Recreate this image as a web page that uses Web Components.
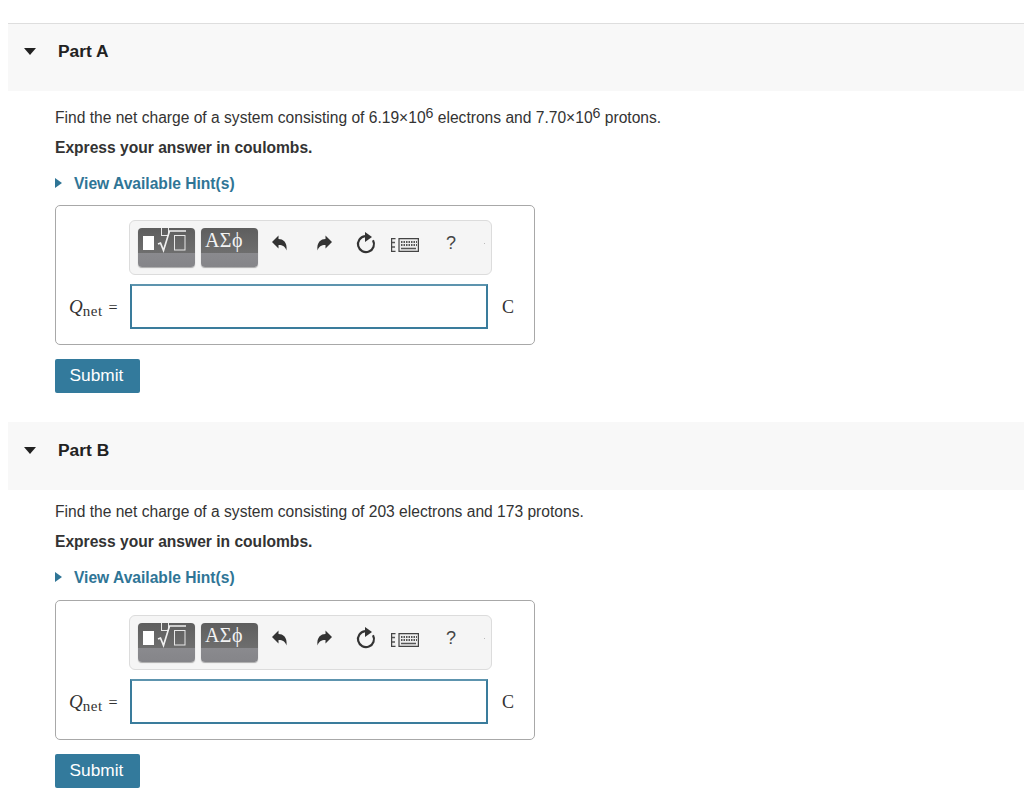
<!DOCTYPE html>
<html>
<head>
<meta charset="utf-8">
<title>Part A and Part B</title>
<style>
  html, body { margin: 0; padding: 0; background: #fff; }
  body { font-family: "Liberation Sans", Arial, sans-serif; color: #333; padding: 23px 0 0 8px; overflow: hidden; }
  sup { font-size: 14.200px; line-height: 0; vertical-align: 5px; }
</style>
</head>
<body>
<mp-part label="Part A" first>
  <span>Find the net charge of a system consisting of 6.19×10<sup>6</sup> electrons and 7.70×10<sup>6</sup> protons.</span>
</mp-part>
<mp-part label="Part B">
  <span>Find the net charge of a system consisting of 203 electrons and 173 protons.</span>
</mp-part>

<script>
class MpToolbar extends HTMLElement {
  constructor() {
    super();
    this.attachShadow({ mode: 'open' });
    this.shadowRoot.innerHTML = `
      <style>
        :host { display: flex; box-sizing: border-box; height: 55px; margin-left: 73px; width: 363px;
          padding: 7px 0 0 8px; background: #f5f5f5; border: 1px solid #dcdcdc; border-radius: 6px; }
        .tool { box-sizing: border-box; width: 57px; height: 39px; margin-right: 6px; border-radius: 4px; position: relative;
          background: linear-gradient(#5e5e5e 0, #6e6e6e 25px, #8a8a8e 25px, #858589 100%); box-shadow: 0 1px 1px #aaa; overflow: hidden; }
        .tool svg { position: absolute; left: 0; top: 0; }
        .greek { color: #f2f2f2; font: 20px/1 "Liberation Serif", serif; padding: 2px 0 0 4px; letter-spacing: 0.4px; }
        .icons { position: relative; flex: 1; }
        .icons svg { position: absolute; }
        .help { position: absolute; left: 182px; top: 5px; font-size: 18px; line-height: 20px; color: #444; }
        .dot { position: absolute; left: 220px; top: 15px; width: 1px; height: 1px; background: #bbb; }
      </style>
      <div class="tool">
        <svg width="57" height="39" viewBox="0 0 57 39">
          <rect x="5" y="8" width="11" height="14" fill="#fff"/>
          <rect x="23.500" y="-1" width="7" height="8.500" fill="none" stroke="#e8e8e8"/>
          <path d="M20 16l2.500-1 3 7.500L31.500 3H48" fill="none" stroke="#f0f0f0" stroke-width="1.700"/>
          <rect x="36.500" y="7.500" width="10.500" height="14.500" fill="none" stroke="#e8e8e8"/>
        </svg>
      </div>
      <div class="tool"><div class="greek">ΑΣϕ</div></div>
      <div class="icons">
        <svg style="left:7px;top:6px" width="18" height="18" viewBox="0 0 18 18"><path fill="#333" d="M1 8L7.500 1.500V5C12 5 16.500 8 15.500 16.500 14 12.500 12 11 7.500 11v3.500z"/></svg>
        <svg style="left:51px;top:6px" width="18" height="18" viewBox="0 0 18 18"><path fill="#333" d="M17 8L10.500 1.500V5C6 5 1.500 8 2.500 16.500 4 12.500 6 11 10.500 11v3.500z"/></svg>
        <svg style="left:92px;top:3px" width="22" height="24" viewBox="0 0 22 24"><path fill="none" stroke="#333" stroke-width="2.200" d="M9 5.100A8 8 0 1 0 17 9.200"/><path fill="#333" d="M9 1v10l7-5z"/></svg>
        <svg style="left:127px;top:10px" width="28" height="14" viewBox="0 0 28 14">
          <path fill="#eee" stroke="#444" stroke-width="1.200" d="M4.500 .6H.6v12.800h3.900M8 .6h19.400v12.800H8z"/>
          <path stroke="#555" stroke-width="1.800" stroke-dasharray="1.500 1" d="M10 4h16M10 7h16"/>
          <path stroke="#555" stroke-width="1.400" d="M10 10.500h15M1 4.500h3M1 9h3"/>
        </svg>
        <div class="help">?</div>
        <div class="dot"></div>
      </div>`;
  }
}
customElements.define('mp-toolbar', MpToolbar);

class MpAnswer extends HTMLElement {
  constructor() {
    super();
    this.attachShadow({ mode: 'open' });
    this.shadowRoot.innerHTML = `
      <style>
        :host { display: block; box-sizing: border-box; width: 480px; height: 140px; padding-top: 14px;
          border: 1px solid #a8a8a8; border-radius: 5px; background: #fff; }
        .row { display: flex; align-items: center; margin-top: 9px; height: 45px; }
        .label { width: 74px; box-sizing: border-box; padding-left: 13px; white-space: nowrap; color: #333;
          font-family: "Liberation Serif", serif; display: flex; align-items: baseline; padding-top: 1px; }
        .q { font-style: italic; font-size: 19px; }
        .sub { font-size: 15px; margin: 0 6px 0 0; position: relative; top: 3px; letter-spacing: .5px; }
        .eq { font-size: 16px; }
        .field { box-sizing: border-box; width: 358px; height: 45px; border: 2px solid #3a7c9c; border-top-color: #5d94ae; background: #fff; }
        .unit { margin-left: 14px; font: 18px "Liberation Serif", serif; color: #333; position: relative; top: 1px; }
      </style>
      <mp-toolbar></mp-toolbar>
      <div class="row">
        <div class="label"><span class="q">Q</span><span class="sub">net</span><span class="eq">=</span></div>
        <div class="field"></div>
        <div class="unit">C</div>
      </div>`;
  }
}
customElements.define('mp-answer', MpAnswer);

class MpPart extends HTMLElement {
  constructor() {
    super();
    this.attachShadow({ mode: 'open' });
    const label = this.getAttribute('label');
    this.shadowRoot.innerHTML = `
      <style>
        :host { display: block; font-size: 15.600px; color: #333; }
        :host([first]) { border-top: 1px solid #dedede; }
        :host(:not([first])) { margin-top: 29px; }
        .head { display: flex; align-items: flex-start; height: 67px; background: #f8f8f8; padding-top: 17px; box-sizing: border-box; }
        :host(:not([first])) .head { height: 68px; padding-top: 18px; }
        .caret { width: 0; height: 0; margin: 7px 0 0 16px; border: 6.500px solid transparent; border-bottom: 0; border-top: 7px solid #222; }
        .title { margin-left: 22px; font-size: 17.400px; line-height: 20px; font-weight: bold; color: #222; }
        .body { padding-left: 47px; }
        .text { margin-top: 11px; height: 22px; line-height: 22px; color: #333; }
        :host([first]) .text { padding-top: 5px; }
        .bold { margin-top: 8px; height: 22px; line-height: 22px; font-weight: bold; }
        .hint { display: flex; align-items: center; margin-top: 15px; height: 20px; color: #2f7596; font-weight: bold; }
        .tri { width: 0; height: 0; margin-right: 12px; border: 5.500px solid transparent; border-right: 0; border-left: 7px solid #2f7596; position: relative; top: -1px; }
        mp-answer { margin-top: 11px; }
        :host(:not([first])) mp-answer { margin-top: 12px; }
        button { display: block; box-sizing: border-box; margin-top: 14px; width: 85px; height: 34px; border: 0; border-radius: 2px;
          background: #337a9c; color: #fff; font: 17.300px "Liberation Sans", Arial, sans-serif; padding: 0 2px 2px 0; }
      </style>
      <div class="head"><div class="caret"></div><div class="title">${label}</div></div>
      <div class="body">
        <div class="text"><slot></slot></div>
        <div class="bold">Express your answer in coulombs.</div>
        <div class="hint"><span class="tri"></span>View Available Hint(s)</div>
        <mp-answer></mp-answer>
        <button>Submit</button>
      </div>`;
  }
}
customElements.define('mp-part', MpPart);
</script>
</body>
</html>
